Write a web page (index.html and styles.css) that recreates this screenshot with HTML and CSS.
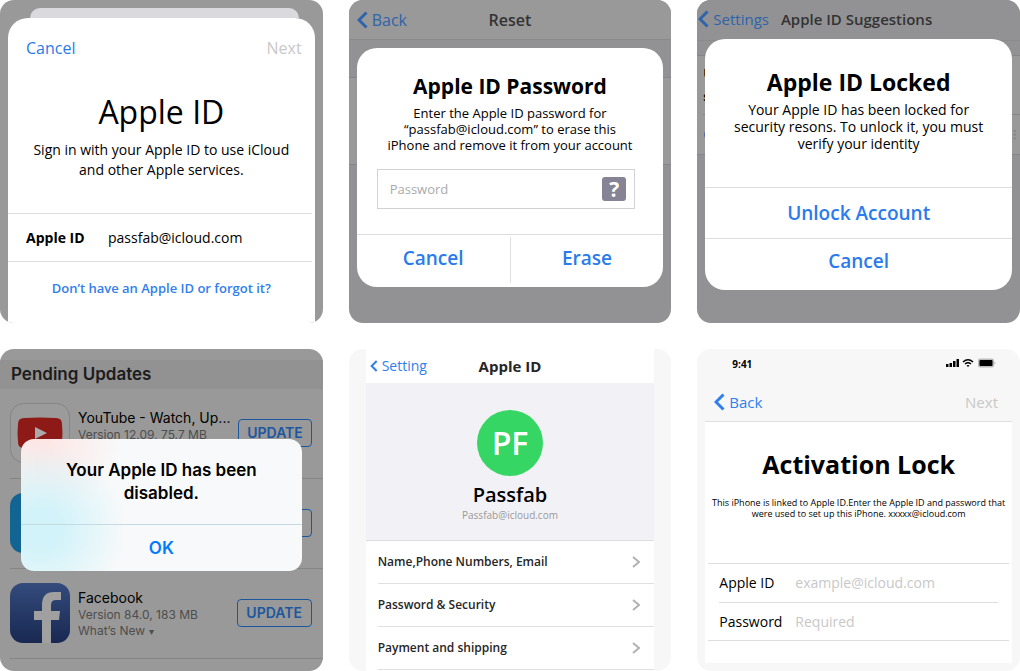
FILE: index.html
```html
<!DOCTYPE html>
<html lang="en">
<head>
  <meta charset="utf-8">
  <title>Apple ID Screens</title>
  <link rel="stylesheet" href="styles.css">
</head>
<body>
  <main class="gallery">

    <!-- Sign in -->
    <section class="card sign-in">
      <div class="sheet-behind"></div>
      <form class="sheet">
        <div class="sheet-nav">
          <button type="button" class="link-btn">Cancel</button>
          <button type="button" class="link-btn muted">Next</button>
        </div>
        <h1 class="sheet-title">Apple ID</h1>
        <p class="sheet-text">Sign in with your Apple ID to use iCloud<br>and other Apple services.</p>
        <div class="sheet-row">
          <label for="signin-id">Apple ID</label>
          <input type="text" id="signin-id" value="passfab@icloud.com">
        </div>
        <a href="#" class="sheet-help">Don’t have an Apple ID or forgot it?</a>
      </form>
    </section>

    <!-- Reset -->
    <section class="card reset">
      <header class="dim-nav">
        <a href="#" class="back"><svg class="chevron" viewBox="0 0 11 18"><path d="M9.500 1.500 2 9l7.500 7.500"/></svg>Back</a>
        <h2>Reset</h2>
      </header>
      <div class="dim-group"></div>
      <form class="dialog reset-dialog">
        <h3>Apple ID Password</h3>
        <p>Enter the Apple ID password for<br>“passfab@icloud.com” to erase this<br>iPhone and remove it from your account</p>
        <div class="password-box">
          <input type="password" placeholder="Password" aria-label="Password">
          <button type="button" class="hint">?</button>
        </div>
        <div class="split-actions">
          <button type="button">Cancel</button>
          <button type="button">Erase</button>
        </div>
      </form>
    </section>

    <!-- Suggestions -->
    <section class="card suggestions">
      <header class="dim-nav">
        <a href="#" class="back"><svg class="chevron" viewBox="0 0 11 18"><path d="M9.500 1.500 2 9l7.500 7.500"/></svg>Settings</a>
        <h2>Apple ID Suggestions</h2>
      </header>
      <div class="dim-list">
        <p class="dim-copy">U<br>s</p>
        <p class="dim-link"><span>C</span><span class="dim-mark">⁝</span></p>
      </div>
      <div class="dialog locked-dialog">
        <h3>Apple ID Locked</h3>
        <p>Your Apple ID has been locked for<br>security resons. To unlock it, you must<br>verify your identity</p>
        <button type="button">Unlock Account</button>
        <button type="button">Cancel</button>
      </div>
    </section>

    <!-- Updates -->
    <section class="card updates">
      <h2 class="updates-title">Pending Updates</h2>
      <ul class="apps">
        <li class="app">
          <svg class="app-icon" viewBox="0 0 60 60">
            <rect x=".5" y=".5" width="59" height="59" rx="13" fill="#9b9b9b" stroke="#858585"/>
            <path d="M14 15Q30 14 46 15Q52 15 52 21Q53 30 52 39Q52 45 46 45Q30 46 14 45Q8 45 8 39Q7 30 8 21Q8 15 14 15Z" fill="#8e1a17"/>
            <path d="M25 24v12l12-6z" fill="#aaa"/>
          </svg>
          <div class="app-info">
            <h3>YouTube - Watch, Up...</h3>
            <p>Version 12.09, 75.7 MB</p>
          </div>
          <button type="button" class="update">UPDATE</button>
        </li>
        <li class="app">
          <svg class="app-icon" viewBox="0 0 60 60"><rect width="60" height="60" rx="13" fill="#126493"/></svg>
          <div class="app-info"></div>
          <button type="button" class="update" aria-label="Update"></button>
        </li>
        <li class="app">
          <svg class="app-icon" viewBox="0 0 60 60">
            <defs><linearGradient id="fb" x2="0" y2="1"><stop stop-color="#344b7c"/><stop offset="1" stop-color="#182851"/></linearGradient></defs>
            <rect width="60" height="60" rx="13" fill="url(#fb)"/>
            <path d="M32 60V37h-8v-9h8v-6q0-13 12-13h7v8h-5q-5 0-5 5v6h9l-1 9h-8v23z" fill="#a0a0a0"/>
          </svg>
          <div class="app-info">
            <h3>Facebook</h3>
            <p>Version 84.0, 183 MB<br>What’s New <span class="caret">▾</span></p>
          </div>
          <button type="button" class="update">UPDATE</button>
        </li>
      </ul>
      <div class="alert">
        <p>Your Apple ID has been<br>disabled.</p>
        <button type="button">OK</button>
      </div>
    </section>

    <!-- Account -->
    <section class="card account">
      <div class="account-screen">
        <header class="account-nav">
          <a href="#" class="back"><svg class="chevron" viewBox="0 0 11 18"><path d="M9.500 1.500 2 9l7.500 7.500"/></svg>Setting</a>
          <h2>Apple ID</h2>
        </header>
        <div class="profile">
          <div class="avatar">PF</div>
          <h3>Passfab</h3>
          <p>Passfab@icloud.com</p>
        </div>
        <nav class="menu">
          <a href="#">Name,Phone Numbers, Email<svg viewBox="0 0 8 12"><path d="M1 1l6 5-6 5"/></svg></a>
          <a href="#">Password &amp; Security<svg viewBox="0 0 8 12"><path d="M1 1l6 5-6 5"/></svg></a>
          <a href="#">Payment and shipping<svg viewBox="0 0 8 12"><path d="M1 1l6 5-6 5"/></svg></a>
        </nav>
      </div>
    </section>

    <!-- Activation -->
    <section class="card activation">
      <div class="status-bar">
        <span>9:41</span>
        <svg viewBox="0 0 50 10">
          <path d="M0 6h2.500v3H0zM3.500 5H6v4H3.500zM7 3h2.500v6H7zM10.500 1H13v8h-2.500z"/>
          <path d="M17 4q5-4.500 10 0M19 6q3-2.500 6 0" fill="none" stroke="#000" stroke-width="1.500"/>
          <path d="M20.500 7.500q1.500-1 3 0L22 9z"/>
          <rect x="32" y=".5" width="16" height="9" rx="2" fill="#bbb"/>
          <rect x="33.500" y="2" width="13" height="6" rx="1"/>
          <path d="M48.500 3.500q2 1.500 0 3z" fill="#aaa"/>
        </svg>
      </div>
      <div class="activation-nav">
        <a href="#" class="back"><svg class="chevron" viewBox="0 0 11 18"><path d="M9.500 1.500 2 9l7.500 7.500"/></svg>Back</a>
        <button type="button" class="link-btn muted">Next</button>
      </div>
      <form class="activation-body">
        <h2>Activation Lock</h2>
        <p>This iPhone is linked to Apple ID.Enter the Apple ID and password that<br>were used to set up this iPhone. xxxxx@icloud.com</p>
        <div class="fields">
          <div class="field">
            <label for="lock-id">Apple ID</label>
            <input type="text" id="lock-id" placeholder="example@icloud.com">
          </div>
          <div class="field">
            <label for="lock-pass">Password</label>
            <input type="password" id="lock-pass" placeholder="Required">
          </div>
        </div>
      </form>
    </section>

  </main>
</body>
</html>
```
FILE: styles.css
```css
* {
  box-sizing: border-box;
}
body {
  margin: 0;
  background: #fff;
  color: #000;
  font-family: "Open Sans", sans-serif;
}
h1, h2, h3, p, ul {
  margin: 0;
  padding: 0;
}
a {
  color: #2f80ed;
  text-decoration: none;
}
button, input {
  font-family: inherit;
  border: none;
  background: none;
  padding: 0;
  margin: 0;
}
button {
  color: #2a7bec;
  cursor: pointer;
}
input {
  min-width: 0;
  outline: none;
}
.gallery {
  display: grid;
  grid-template-columns: repeat(3, 1fr);
  grid-template-rows: 1fr 1fr;
  gap: 26px;
  min-height: 100vh;
}
.card {
  position: relative;
  overflow: hidden;
  border-radius: 14px;
  display: flex;
  flex-direction: column;
}
.back {
  display: flex;
  align-items: center;
  gap: 4px;
}
.chevron {
  width: 11px;
  height: 18px;
  fill: none;
  stroke: currentColor;
  stroke-width: 3;
}
.link-btn {
  font-size: 16px;
  line-height: 22px;
}
.muted,
.link-btn.muted {
  color: #c8c8c8;
}

/* sign in */
.sign-in {
  background: #999;
  padding: 8px 8px 0;
}
.sheet-behind {
  height: 10px;
  margin: 0 16px 0 22px;
  border-radius: 10px 10px 0 0;
  background: #d9d9de;
}
.sheet {
  flex: 1;
  display: flex;
  flex-direction: column;
  border-radius: 20px 20px 0 0;
  background: #fff;
}
.sheet-nav {
  display: flex;
  justify-content: space-between;
  padding: 19px 13px 0 18px;
}
.sheet-title {
  margin-top: 31px;
  font-size: 32px;
  font-weight: 400;
  line-height: 44px;
  text-align: center;
}
.sheet-text {
  margin-top: 6px;
  font-size: 14px;
  line-height: 20px;
  text-align: center;
}
.sheet-row {
  display: flex;
  align-items: center;
  height: 49px;
  margin: 33px 3px 0 0;
  padding-left: 18px;
  border-top: 1px solid #dedede;
  border-bottom: 1px solid #dedede;
  font-size: 14px;
}
.sheet-row label {
  width: 82px;
  font-weight: 700;
}
.sheet-row input {
  flex: 1;
  font-size: 14px;
}
.sheet-help {
  margin-top: 17px;
  font-size: 13px;
  font-weight: 600;
  line-height: 18px;
  text-align: center;
}

/* dimmed screens behind a dialog */
.dim-nav {
  position: relative;
  height: 40px;
  display: flex;
  align-items: center;
  border-bottom: 1px solid #8b8b8d;
  background: #999;
}
.dim-nav .back {
  color: #2d64ab;
}
.dim-nav h2 {
  color: #333;
  font-weight: 600;
}
.dialog {
  position: absolute;
  left: 8px;
  right: 8px;
  display: flex;
  flex-direction: column;
  border-radius: 20px;
  background: #fff;
  text-align: center;
}
.dialog h3 {
  font-weight: 700;
  line-height: 28px;
}
.dialog button {
  font-size: 19px;
  font-weight: 600;
}
.reset,
.suggestions {
  background: #929294;
}
.reset .dim-nav {
  justify-content: center;
}
.reset .back {
  position: absolute;
  left: 8px;
  font-size: 16px;
}
.reset h2 {
  font-size: 16px;
}
.dim-group {
  height: 88px;
  margin-top: 37px;
  border-top: 1px solid #868688;
  border-bottom: 1px solid #868688;
  background: #999;
}
.reset-dialog {
  top: 48px;
  padding-top: 24px;
}
.reset-dialog h3 {
  font-size: 21px;
}
.reset-dialog p {
  margin-top: 5px;
  font-size: 13px;
  line-height: 16px;
}
.password-box {
  display: flex;
  align-items: center;
  height: 40px;
  margin: 16px 28px 25px 20px;
  padding: 0 8px 0 12px;
  border: 1px solid #d2d2d2;
}
.password-box input {
  flex: 1;
  font-size: 13px;
}
::placeholder {
  color: #aaa;
}
.password-box .hint {
  width: 24px;
  height: 24px;
  border-radius: 3px;
  background: #868394;
  color: #fff;
  font-size: 21px;
  font-weight: 700;
  line-height: 24px;
}
.split-actions {
  display: flex;
  height: 53px;
  border-top: 1px solid #dedede;
}
.split-actions button {
  flex: 1;
  margin: 2px 0 4px;
  padding-bottom: 4px;
}
.split-actions button + button {
  border-left: 1px solid #dedede;
}

/* suggestions */
.suggestions .dim-nav {
  gap: 12px;
  height: 41px;
  padding: 0 0 2px 1px;
  background: #929294;
}
.suggestions .back,
.suggestions h2 {
  font-size: 15px;
}
.suggestions .back {
  font-weight: 500;
}
.dim-list {
  margin-top: 14px;
  padding-left: 6px;
  border-top: 1px solid #868688;
  border-bottom: 1px solid #868688;
  background: #999;
}
.dim-copy {
  padding: 6px 0;
  border-bottom: 1px solid #868688;
  font-size: 13px;
  font-weight: 700;
  line-height: 23px;
}
.dim-link {
  display: flex;
  justify-content: space-between;
  padding-right: 4px;
  color: #2d64ab;
  font-size: 13px;
  line-height: 39px;
}
.dim-mark {
  color: #777;
}
.locked-dialog {
  top: 39px;
}
.locked-dialog h3 {
  padding-top: 29px;
  font-size: 23px;
}
.locked-dialog p {
  margin: 5px 0 35px;
  font-size: 14px;
  line-height: 17px;
}
.locked-dialog button {
  height: 51px;
  border-top: 1px solid #dedede;
}
.locked-dialog button:last-child {
  height: 52px;
  padding-bottom: 8px;
}

/* updates */
.updates {
  background: #999;
  font-family: Inter, sans-serif;
}
.updates-title {
  margin-top: 11px;
  padding-left: 11px;
  background: #929292;
  color: #1c1c1c;
  font-size: 17px;
  font-weight: 600;
  line-height: 29px;
}
.apps {
  list-style: none;
}
.app {
  display: flex;
  gap: 8px;
  height: 90px;
  margin-left: 10px;
  padding: 14px 11px 0 0;
  border-bottom: 1px solid #858585;
}
.app-icon {
  width: 60px;
  height: 60px;
  flex: none;
}
.app-info {
  flex: 1;
  padding-top: 5px;
  white-space: nowrap;
}
.app-info h3 {
  font-size: 14px;
  font-weight: 400;
  line-height: 19px;
}
.app-info p {
  color: #4d4d4d;
  font-size: 12px;
  line-height: 16px;
}
.caret {
  font-size: 10px;
}
.update {
  width: 75px;
  height: 28px;
  margin-top: 16px;
  border: 1px solid #1b579f;
  border-radius: 4px;
  color: #1b579f;
  font-size: 14px;
  font-weight: 600;
}
.alert {
  position: absolute;
  top: 90px;
  left: 21px;
  right: 21px;
  border-radius: 13px;
  background:
    radial-gradient(circle at 20px 90px, #d2f3f9 20px, rgba(210, 243, 249, 0) 85px),
    radial-gradient(circle at 20px 0, #fde5e4, rgba(253, 229, 228, 0) 80px),
    #f8f9fa;
  text-align: center;
}
.alert p {
  padding: 20px 0 19px;
  border-bottom: 1px solid #c4dce1;
  font-size: 17px;
  font-weight: 600;
  line-height: 23px;
}
.alert button {
  width: 100%;
  height: 46px;
  color: #007aff;
  font-size: 17px;
  font-weight: 600;
}

/* account */
.account {
  padding: 0 17px;
  background: #f7f7f7;
}
.account-screen {
  flex: 1;
  background: #fff;
}
.account-nav {
  position: relative;
  display: flex;
  align-items: center;
  justify-content: center;
  height: 34px;
}
.account-nav .back {
  position: absolute;
  left: 4px;
  font-size: 14px;
}
.account-nav .chevron {
  width: 8px;
  height: 12px;
}
.account-nav h2 {
  color: #262626;
  font-size: 15px;
  font-weight: 700;
}
.profile {
  height: 158px;
  padding-top: 27px;
  border-bottom: 1px solid #dedee2;
  background: #f2f1f6;
  text-align: center;
}
.avatar {
  width: 66px;
  height: 66px;
  margin: 0 auto;
  border-radius: 50%;
  background: #35d663;
  color: #fff;
  font-size: 32px;
  font-weight: 600;
  line-height: 66px;
}
.profile h3 {
  margin-top: 6px;
  font-size: 20px;
  font-weight: 600;
  line-height: 26px;
}
.profile p {
  color: #999;
  font-size: 10px;
  line-height: 14px;
}
.menu a {
  display: flex;
  align-items: center;
  justify-content: space-between;
  height: 43px;
  margin-left: 12px;
  padding-right: 14px;
  border-bottom: 1px solid #e0e0e0;
  color: #262626;
  font-size: 12px;
  font-weight: 600;
}
.menu svg {
  width: 8px;
  height: 12px;
  fill: none;
  stroke: #b2b2b2;
  stroke-width: 2;
}

/* activation */
.activation {
  padding: 0 8px 8px;
  background: #f7f7f7;
}
.status-bar {
  display: flex;
  align-items: center;
  justify-content: space-between;
  height: 30px;
  padding: 0 16px 0 27px;
  font-size: 10px;
  font-weight: 700;
}
.status-bar svg {
  width: 50px;
  height: 10px;
  margin-bottom: 2px;
}
.activation-nav {
  display: flex;
  align-items: center;
  justify-content: space-between;
  height: 43px;
  padding: 5px 14px 0 9px;
  border-bottom: 1px solid #e0e0e0;
  font-size: 15px;
}
.activation-nav .link-btn {
  font-size: 15px;
}
.activation-body {
  flex: 1;
  padding-top: 25px;
  background: #fff;
  text-align: center;
}
.activation-body h2 {
  font-size: 25px;
  font-weight: 700;
  line-height: 34px;
}
.activation-body p {
  margin-top: 16px;
  font-size: 9px;
  line-height: 11px;
}
.fields {
  margin: 44px 3px 0;
  padding: 0 11px;
  border-top: 1px solid #dedede;
  border-bottom: 1px solid #dedede;
}
.field {
  display: flex;
  align-items: center;
  height: 38px;
  font-size: 14px;
  text-align: left;
}
.field + .field {
  border-top: 1px solid #dedede;
}
.field label {
  width: 76px;
}
.field input {
  flex: 1;
  font-size: 14px;
}
.field input::placeholder {
  color: #c8c8c8;
}
```
